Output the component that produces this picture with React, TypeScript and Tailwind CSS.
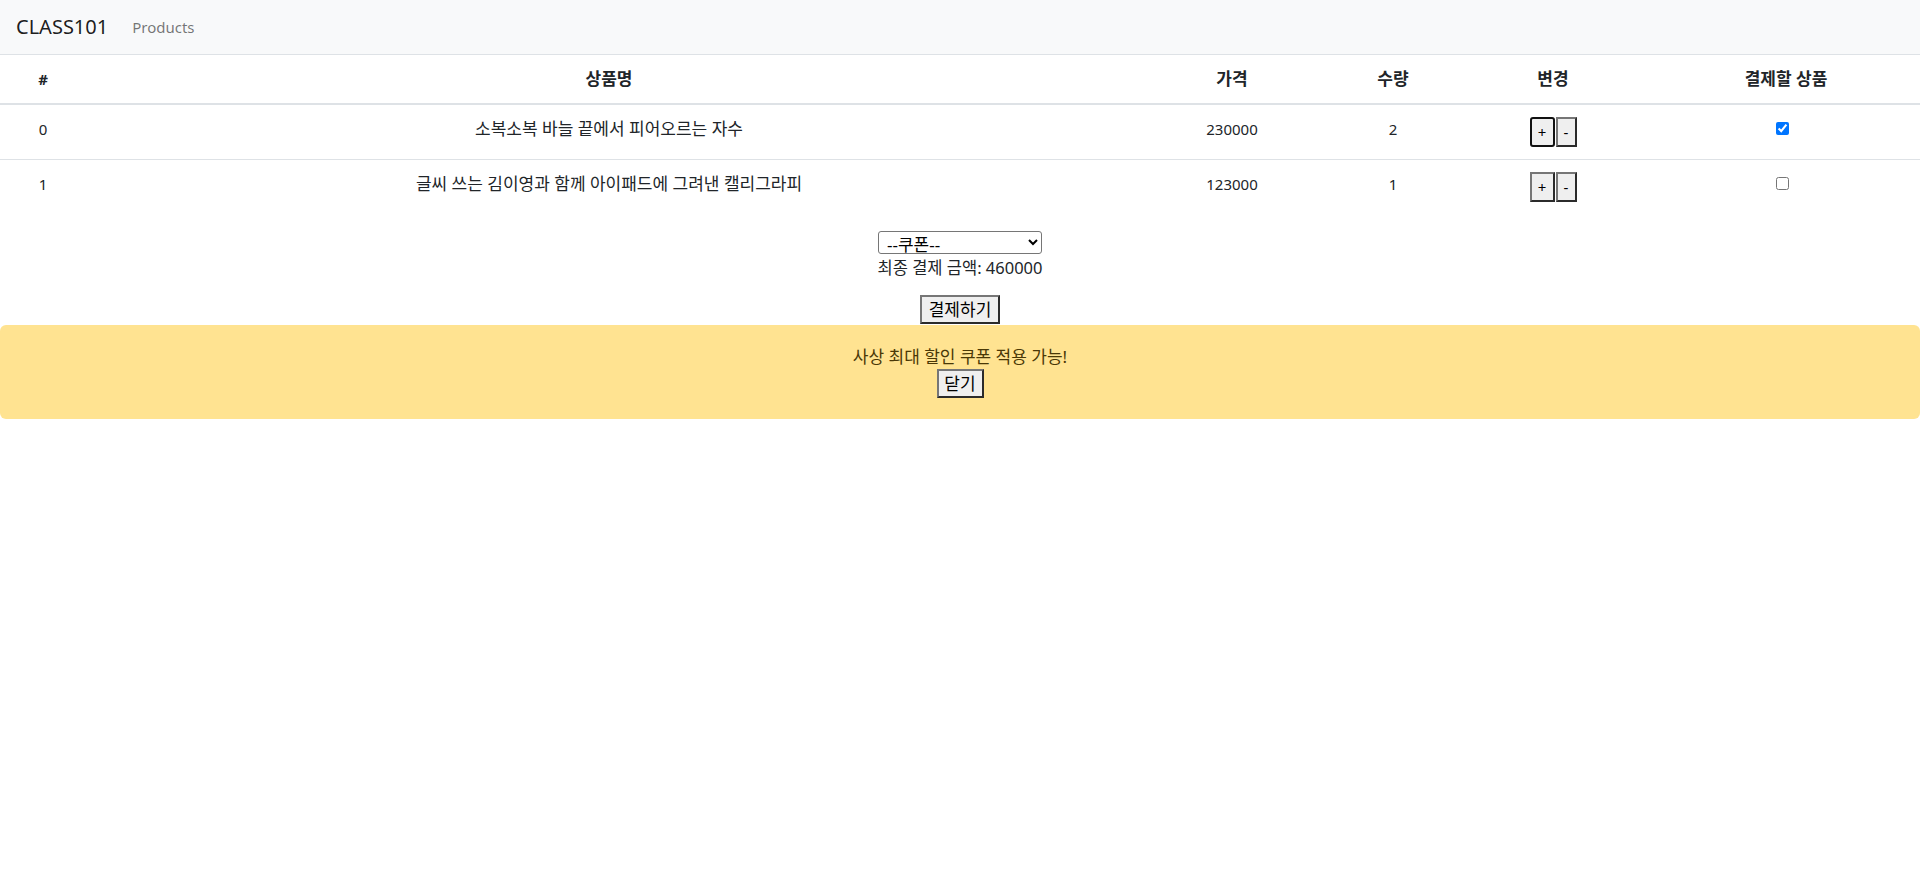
import React, { useState } from 'react';

interface Product {
  id: number;
  title: string;
  price: number;
  count: number;
  checked: boolean;
}

const initialProducts: Product[] = [
  { id: 0, title: '소복소복 바늘 끝에서 피어오르는 자수', price: 230000, count: 2, checked: true },
  { id: 1, title: '글씨 쓰는 김이영과 함께 아이패드에 그려낸 캘리그라피', price: 123000, count: 1, checked: false },
];

const oldButton =
  'bg-[#efefef] text-black border-2 border-t-[#767676] border-l-[#767676] border-b-[#2b2b2b] border-r-[#2b2b2b] px-[6px] leading-none whitespace-nowrap';

export default function App() {
  const [products, setProducts] = useState<Product[]>(initialProducts);
  const [showAlert, setShowAlert] = useState(true);

  const changeCount = (id: number, delta: number) => {
    setProducts((prev) =>
      prev.map((p) => (p.id === id ? { ...p, count: Math.max(0, p.count + delta) } : p))
    );
  };

  const toggle = (id: number) => {
    setProducts((prev) => prev.map((p) => (p.id === id ? { ...p, checked: !p.checked } : p)));
  };

  const total = products.filter((p) => p.checked).reduce((sum, p) => sum + p.price * p.count, 0);

  return (
    <div className="min-h-screen bg-white text-[#212529] text-[16px] font-['Noto_Sans','Noto_Sans_CJK_KR',sans-serif]">
      <nav className="h-[55px] bg-[#f8f9fa] border-b border-[#dee2e6] flex items-center px-4">
        <span className="text-[20px] leading-[30px] text-black/90 mr-4">CLASS101</span>
        <span className="text-[15px] leading-6 text-black/55 px-2">Products</span>
      </nav>

      <table className="w-full table-fixed border-collapse mb-4">
        <colgroup>
          <col className="w-[86px]" />
          <col className="w-[1046px]" />
          <col className="w-[200px]" />
          <col className="w-[122px]" />
          <col className="w-[198px]" />
          <col className="w-[268px]" />
        </colgroup>
        <thead>
          <tr className="border-b-2 border-[#dee2e6]">
            {['#', '상품명', '가격', '수량', '변경', '결제할 상품'].map((h) => (
              <th
                key={h}
                className={`py-3 px-2 text-center font-bold leading-6 ${h === '#' ? 'text-[15px]' : 'text-[17px]'}`}
              >
                {h}
              </th>
            ))}
          </tr>
        </thead>
        <tbody>
          {products.map((p, i) => (
            <tr
              key={p.id}
              className={i < products.length - 1 ? 'border-b border-[#dee2e6]' : 'border-b border-transparent'}
            >
              <td className="py-3 px-2 text-center align-top leading-6 text-[15px]">{p.id}</td>
              <td className="py-3 px-2 text-center align-top leading-6 text-[17px]">{p.title}</td>
              <td className="py-3 px-2 text-center align-top leading-6 text-[15px]">{p.price}</td>
              <td className="py-3 px-2 text-center align-top leading-6 text-[15px]">{p.count}</td>
              <td className="py-3 px-2 align-top">
                <div className="flex justify-center gap-px h-[30px]">
                  <button
                    onClick={() => changeCount(p.id, 1)}
                    className={
                      i === 0
                        ? 'bg-[#efefef] text-black border-2 border-[#111] rounded-[3px] px-[6px] h-[30px] w-[25px] text-[15px]'
                        : `${oldButton} h-[30px] w-[25px] text-[15px]`
                    }
                  >
                    +
                  </button>
                  <button
                    onClick={() => changeCount(p.id, -1)}
                    className={`${oldButton} h-[30px] w-[21px] text-[15px]`}
                  >
                    -
                  </button>
                </div>
              </td>
              <td className="py-3 pl-2 pr-4 align-top">
                <div className="flex justify-center items-center h-6 -mt-[1px]">
                  <input
                    type="checkbox"
                    checked={p.checked}
                    onChange={() => toggle(p.id)}
                    className="w-[13px] h-[13px]"
                  />
                </div>
              </td>
            </tr>
          ))}
        </tbody>
      </table>

      <div className="flex flex-col items-center">
        <select className="w-[164px] h-[23px] border border-[#767676] rounded-[3px] bg-white text-black text-[17px] pl-1 leading-none">
          <option>--쿠폰--</option>
          <option>10% 할인 쿠폰</option>
          <option>10000원 할인 쿠폰</option>
        </select>
        <p className="leading-6 mt-[2px] mb-[15px] text-[16.5px]">최종 결제 금액: {total}</p>
        <button className={`${oldButton} h-[29px] w-[80px] text-[17px]`}>결제하기</button>
      </div>

      {showAlert && (
        <div className="mt-px bg-[#ffe391] rounded-md pt-4 pb-[21px] flex flex-col items-center text-[#4a3806]">
          <p className="leading-6 text-[17px] mt-[4px]">사상 최대 할인 쿠폰 적용 가능!</p>
          <button
            onClick={() => setShowAlert(false)}
            className="bg-[#efefef] text-black border-2 border-t-[#767676] border-l-[#767676] border-b-[#2b2b2b] border-r-[#2b2b2b] px-[4px] leading-none whitespace-nowrap h-[29px] w-[47px] text-[17px]"
          >
            닫기
          </button>
        </div>
      )}
    </div>
  );
}
